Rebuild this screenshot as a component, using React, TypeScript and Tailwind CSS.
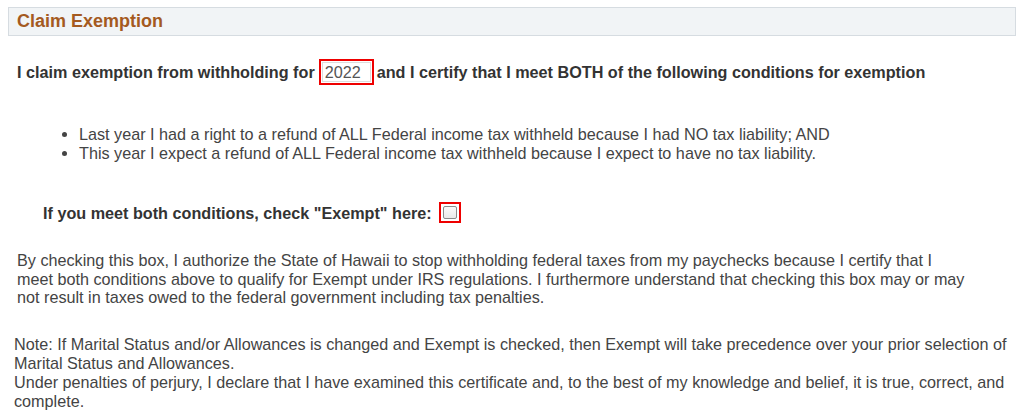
export default function App() {
  return (
    <div className="w-[1024px] h-[418px] bg-white overflow-hidden text-[16.2px] leading-[19px] text-[#444] font-['Liberation_Sans',Arial,sans-serif]">
      {/* Section header */}
      <div className="mx-[8px] mt-[7px] h-[29px] border border-[#d6dce1] bg-[#f1f4f6] flex items-center pl-[8px]">
        <h2 className="text-[18px] font-bold text-[#a45a1f]">Claim Exemption</h2>
      </div>

      {/* Certification line */}
      <div className="flex items-center pl-[17px] mt-[23px] font-bold text-[#333]">
        <span>I claim exemption from withholding for</span>
        <div className="ml-[4px] mr-[3px] w-[55px] h-[26px] border-2 border-[#e00] p-[1px]">
          <div className="h-full border border-[#ddd] bg-white flex items-center pl-[2px] font-normal text-[#555]">2022</div>
        </div>
        <span>and I certify that I meet BOTH of the following conditions for exemption</span>
      </div>

      {/* Conditions */}
      <ul className="mt-[40px] pl-[79px] list-disc">
        <li>Last year I had a right to a refund of ALL Federal income tax withheld because I had NO tax liability; AND</li>
        <li>This year I expect a refund of ALL Federal income tax withheld because I expect to have no tax liability.</li>
      </ul>

      {/* Exempt checkbox */}
      <div className="flex items-center pl-[43px] mt-[38px] font-bold text-[#333]">
        <span className="mt-[3px]">If you meet both conditions, check "Exempt" here:</span>
        <div className="ml-[7px] w-[22px] h-[21px] border-2 border-[#e00] flex items-center justify-center">
          <div className="w-[14px] h-[13px] rounded-[2px] border border-[#8a8a8a] bg-gradient-to-b from-[#fbfbfb] to-[#e9e9e9]" />
        </div>
      </div>

      {/* Authorization */}
      <p className="pl-[17px] mt-[28px] leading-[18.5px]">
        By checking this box, I authorize the State of Hawaii to stop withholding federal taxes from my paychecks because I certify that I
        <br />
        meet both conditions above to qualify for Exempt under IRS regulations. I furthermore understand that checking this box may or may
        <br />
        not result in taxes owed to the federal government including tax penalties.
      </p>

      {/* Note */}
      <p className="pl-[14px] mt-[28px]">
        Note: If Marital Status and/or Allowances is changed and Exempt is checked, then Exempt will take precedence over your prior selection of
        <br />
        Marital Status and Allowances.
        <br />
        Under penalties of perjury, I declare that I have examined this certificate and, to the best of my knowledge and belief, it is true, correct, and
        <br />
        complete.
      </p>
    </div>
  );
}
